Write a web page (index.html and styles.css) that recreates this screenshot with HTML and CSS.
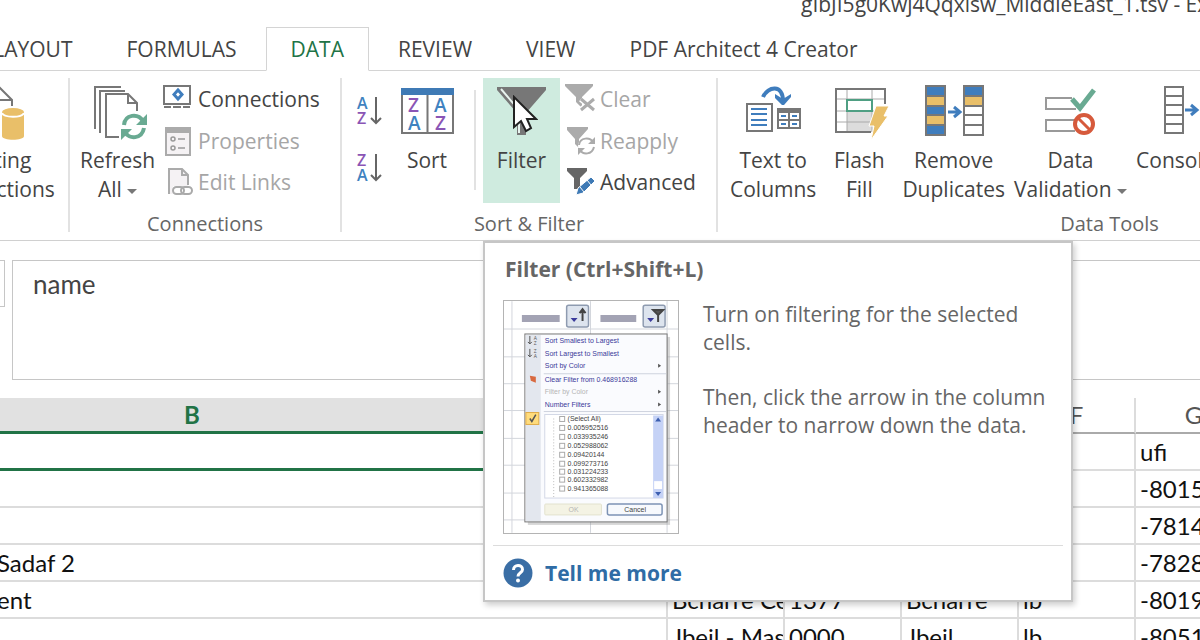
FILE: index.html
```html
<!DOCTYPE html>
<html lang="en">
<head>
  <meta charset="UTF-8">
  <title>MiddleEast_1.tsv - Excel</title>
  <link rel="stylesheet" href="styles.css">
</head>
<body>
  <header class="titlebar">gIbJI5g0Kwj4Qqxlsw_MiddleEast_1.tsv - Excel</header>

  <nav class="tabs">
    <button class="tab">PAGE LAYOUT</button>
    <button class="tab">FORMULAS</button>
    <button class="tab active">DATA</button>
    <button class="tab">REVIEW</button>
    <button class="tab">VIEW</button>
    <button class="tab">PDF Architect 4 Creator</button>
  </nav>

  <div class="ribbon">
    <section class="group external">
      <div class="tools">
        <button class="big">
          <svg class="icon" viewBox="0 0 60 56">
            <path d="M20 3H35L48 16V22M35 3V16H48M20 3V50H34" fill="none" stroke="#777" stroke-width="2"/>
            <path d="M38 28V52C38 57 60 57 60 52V28Z" fill="#e9bf69"/>
            <ellipse cx="49" cy="28" rx="11" ry="4" fill="#e9bf69"/>
            <path d="M38 29C40 34 58 34 60 29" fill="none" stroke="#fff" stroke-width="2"/>
          </svg>
          <span>Existing<br>Connections</span>
        </button>
      </div>
    </section>

    <section class="group connections">
      <div class="tools">
        <button class="big">
          <svg class="icon" viewBox="0 0 60 56">
            <g fill="none" stroke="#777" stroke-width="2">
              <path d="M7 45V3H33M12 49V7H37M31 53H18V10H40L49 19V27M40 10V19H49"/>
            </g>
            <g fill="none" stroke="#69aa92" stroke-width="4">
              <path d="M36 41C37 30 50 29 55 37M56 44C54 55 41 56 37 48"/>
            </g>
            <path d="M59 30V41H48ZM33 56V45H44Z" fill="#69aa92"/>
          </svg>
          <span>Refresh<br>All <i class="caret"></i></span>
        </button>
        <div class="stack">
          <button class="small">
            <svg viewBox="0 0 32 30">
              <path d="M1 2H27V20H1ZM1 23H8M10 23H18M20 23H27" fill="none" stroke="#777" stroke-width="2"/>
              <path d="M15 6L19 10.500L15 15L11 10.500Z" fill="none" stroke="#3f7dbd" stroke-width="3"/>
            </svg>
            Connections
          </button>
          <button class="small" disabled>
            <svg viewBox="0 0 32 30">
              <path d="M3 2H27V29H3Z" fill="#f5f2f4" stroke="#ababab" stroke-width="2"/>
              <path d="M2 1H28V7H2Z" fill="#ababab"/>
              <g fill="none" stroke="#999" stroke-width="1.500">
                <circle cx="10" cy="13" r="2"/><circle cx="10" cy="22" r="2"/>
                <path d="M15 13H22M15 22H22"/>
              </g>
            </svg>
            Properties
          </button>
          <button class="small" disabled>
            <svg viewBox="0 0 32 30">
              <path d="M6 27V2H19L25 8V19H10V27Z" fill="#f5f2f4"/>
              <path d="M6 27V2H19L25 8V18M19 2V8H25" fill="none" stroke="#ababab" stroke-width="2"/>
              <g fill="none" stroke="#aaa" stroke-width="2">
                <rect x="10" y="20" width="11" height="7" rx="3.500"/>
                <rect x="18" y="20" width="11" height="7" rx="3.500"/>
              </g>
            </svg>
            Edit Links
          </button>
        </div>
      </div>
      <h2>Connections</h2>
    </section>

    <section class="group sorting">
      <div class="tools">
        <div class="orders">
          <button class="order" aria-label="Sort A to Z">
            <svg viewBox="0 0 30 32">
              <text x="2" y="15" class="letter-a">A</text>
              <text x="2" y="30" class="letter-z">Z</text>
              <path d="M21 3V29M16 24L21 29L26 24" fill="none" stroke="#666" stroke-width="2"/>
            </svg>
          </button>
          <button class="order" aria-label="Sort Z to A">
            <svg viewBox="0 0 30 32">
              <text x="2" y="15" class="letter-z">Z</text>
              <text x="2" y="30" class="letter-a">A</text>
              <path d="M21 3V29M16 24L21 29L26 24" fill="none" stroke="#666" stroke-width="2"/>
            </svg>
          </button>
        </div>
        <button class="big sort">
          <svg class="icon" viewBox="0 0 60 56">
            <path d="M5 5H56V49H5ZM30.500 10V49" fill="#fff" stroke="#777" stroke-width="2"/>
            <path d="M4 4H57V11H4Z" fill="#3f7ab5"/>
            <g class="wide-letters">
              <text x="11" y="28" class="letter-z">Z</text>
              <text x="11" y="46" class="letter-a">A</text>
              <text x="37" y="28" class="letter-a">A</text>
              <text x="38" y="46" class="letter-z">Z</text>
            </g>
          </svg>
          <span>Sort</span>
        </button>
        <div class="rule"></div>
        <button class="big filter">
          <svg class="icon" viewBox="0 0 60 56">
            <path d="M5 3H54V6L34 29V51H25V29L5 6Z" fill="#777"/>
            <path d="M9 5L27 26V49" fill="none" stroke="#e8f3ee" stroke-width="2"/>
          </svg>
          <span>Filter</span>
        </button>
        <div class="stack">
          <button class="small" disabled>
            <svg viewBox="0 0 32 30">
              <path d="M0 0H28V2L17 13V24L11 18V13L0 2Z" fill="#ababab"/>
              <path d="M16 15L29 26M29 15L16 26" fill="none" stroke="#fff" stroke-width="6"/>
              <path d="M16 15L29 26M29 15L16 26" fill="none" stroke="#ababab" stroke-width="3"/>
            </svg>
            Clear
          </button>
          <button class="small" disabled>
            <svg viewBox="0 0 32 30">
              <path d="M2 1H23V3L14 13V22L10 18V13L2 4Z" fill="#ababab"/>
              <circle cx="22" cy="20" r="9" fill="#fff"/>
              <path d="M14 19C15 11 25 11 28 16M29 21C27 29 18 29 15 24" fill="none" stroke="#ababab" stroke-width="2"/>
              <path d="M30 11V18H23ZM13 29V22H20Z" fill="#ababab"/>
            </svg>
            Reapply
          </button>
          <button class="small">
            <svg viewBox="0 0 32 30">
              <path d="M2 1H22V4L15 11V22H9V11L2 4Z" fill="#666"/>
              <path d="M11 28L13 21L26 10L30 14L18 26Z" fill="#3f7ab5" stroke="#fff"/>
              <path d="M15 20L19 25M22 13L26 18" stroke="#fff"/>
            </svg>
            Advanced
          </button>
        </div>
      </div>
      <h2>Sort &amp; Filter</h2>
    </section>

    <section class="group datatools">
      <div class="tools">
        <button class="big">
          <svg class="icon" viewBox="0 0 60 56">
            <path d="M4 20H29V47H4Z" fill="#fff" stroke="#777" stroke-width="2"/>
            <path d="M8 25H24M8 30H24M8 36H24M8 41H24" stroke="#3f7dbd" stroke-width="2"/>
            <path d="M35 25H57V44H35ZM46 29V44M35 36H57" fill="#fff" stroke="#777" stroke-width="2"/>
            <path d="M34 24H58V29H34Z" fill="#777"/>
            <path d="M38 32H43M49 32H54M38 40H43M49 40H54" stroke="#3f7dbd" stroke-width="2"/>
            <path d="M20 13C25 2 40 0 40 17" fill="none" stroke="#3f7dbd" stroke-width="4"/>
            <path d="M32 10L40 15L48 10V13L41 21H39L32 14Z" fill="#3f7dbd"/>
          </svg>
          <span>Text to<br>Columns</span>
        </button>
        <button class="big flash">
          <svg class="icon" viewBox="0 0 60 56">
            <path d="M18 28H43V48H18Z" fill="#dcdcdc"/>
            <path d="M18 5V48M43 5V48M7 15H56M7 27H56M7 38H44" stroke="#aaa" stroke-width="1"/>
            <path d="M56 20V5H7V48H42" fill="none" stroke="#777" stroke-width="2"/>
            <path d="M18 16H43V27H18Z" fill="#fff" stroke="#4f9f83" stroke-width="2"/>
            <path d="M47 22H60L55 32H59L42 56L45 42H40Z" fill="#e9bf69" stroke="#fff"/>
          </svg>
          <span>Flash<br>Fill</span>
        </button>
        <button class="big">
          <svg class="icon" viewBox="0 0 60 56">
            <path d="M2 2H21V51H2Z" fill="#3f7dbd"/>
            <path d="M2 12H21V22H2ZM2 31H21V41H2Z" fill="#e9bf69"/>
            <path d="M40 2H59V12H40Z" fill="#3f7dbd"/>
            <path d="M40 12H59V22H40Z" fill="#e9bf69"/>
            <path d="M2 2H21V51H2ZM2 12H21M2 22H21M2 31H21M2 41H21M40 2H59V51H40ZM40 12H59M40 22H59M40 31H59M40 41H59" fill="none" stroke="#777" stroke-width="2"/>
            <path d="M24 28H35M30 23L36 28L30 33" fill="none" stroke="#3f7dbd" stroke-width="3"/>
          </svg>
          <span>Remove<br>Duplicates</span>
        </button>
        <button class="big">
          <svg class="icon" viewBox="0 0 60 56">
            <path d="M35 25H5V14H31M34 47H5V36H34" fill="none" stroke="#999" stroke-width="2"/>
            <path d="M31 15L39 24L53 6" fill="none" stroke="#69aa92" stroke-width="5"/>
            <circle cx="43" cy="40" r="9" fill="#fff" stroke="#d65a3c" stroke-width="4"/>
            <path d="M37 34L49 46" stroke="#d65a3c" stroke-width="3"/>
          </svg>
          <span>Data<br>Validation <i class="caret"></i></span>
        </button>
        <button class="big">
          <svg class="icon" viewBox="0 0 60 56">
            <path d="M1 3H19V49H1ZM1 12H19M1 21H19M1 31H19M1 40H19" fill="none" stroke="#777" stroke-width="2"/>
            <path d="M21 26H32M27 21L33 26L27 31" fill="none" stroke="#3f7dbd" stroke-width="3"/>
            <path d="M40 16H58V36H40Z" fill="none" stroke="#777" stroke-width="2"/>
          </svg>
          <span>Consolidate</span>
        </button>
      </div>
      <h2>Data Tools</h2>
    </section>
  </div>

  <div class="formula-bar">
    <div class="fx"></div>
    <textarea class="formula" aria-label="Formula bar">name</textarea>
  </div>

  <table class="sheet">
    <colgroup>
      <col class="col-b"><col><col><col><col><col>
    </colgroup>
    <thead>
      <tr><th class="selected">B</th><th></th><th></th><th></th><th>F</th><th>G</th></tr>
    </thead>
    <tbody>
      <tr><td class="current"></td><td></td><td></td><td></td><td></td><td>ufi</td></tr>
      <tr><td></td><td></td><td></td><td></td><td></td><td>-8015</td></tr>
      <tr><td></td><td></td><td></td><td></td><td></td><td>-7814</td></tr>
      <tr><td>Sadaf 2</td><td></td><td></td><td></td><td></td><td>-7828</td></tr>
      <tr><td>ent</td><td>Bcharre Ce</td><td>1377</td><td>Bcharre</td><td>lb</td><td>-8019</td></tr>
      <tr><td></td><td>Jbeil - Mas</td><td>0000</td><td>Jbeil</td><td>lb</td><td>-8051</td></tr>
    </tbody>
  </table>

  <aside class="tooltip">
    <h3>Filter (Ctrl+Shift+L)</h3>
    <div class="tooltip-body">
      <svg class="preview" viewBox="0 0 175 233">
        <path d="M8 0V233M87 0V233M164 0V233M0 28H175M0 56H175M0 83H175M0 110H175M0 138H175M0 165H175M0 193H175M0 220H175" stroke="#d3d6dc"/>
        <path d="M18 14H56V21H18ZM97 14H133V21H97Z" fill="#a3a3b4"/>
        <g fill="#dde4ee" stroke="#8e9bb0" stroke-width="1.500">
          <rect x="63" y="4" width="22" height="22" rx="2"/>
          <rect x="140" y="4" width="22" height="22" rx="2"/>
        </g>
        <path d="M67 17H74L70.500 21ZM144 17H151L147.500 21Z" fill="#3c3c9c"/>
        <path d="M79 20V9M76 12L79 8L82 12M155 21V14L150 9H160L155 14" fill="#555" stroke="#444" stroke-width="2"/>
        <rect x="24" y="36" width="143" height="189" fill="#999" opacity=".4"/>
        <rect x="21" y="33" width="143" height="189" fill="#fafbfe" stroke="#777"/>
        <path d="M22 34H37V221H22Z" fill="#e3e7ee"/>
        <path d="M40 73H163M40 111H163" stroke="#cfd3de"/>
        <path d="M26 35V43M24 41L26 43L28 41M26 48V56M24 54L26 56L28 54" fill="none" stroke="#555"/>
        <g class="sort-marks">
          <text x="30" y="39">A</text><text x="30" y="44">Z</text>
          <text x="30" y="52">Z</text><text x="30" y="57">A</text>
        </g>
        <path d="M26 75L32 76V82L27 80Z" fill="#d8693f"/>
        <rect x="22" y="112" width="13" height="12" fill="#ffdc7c" stroke="#e0ac48"/>
        <path d="M26 118L28 121L32 114" fill="none" stroke="#555" stroke-width="1.500"/>
        <g class="menu-text">
          <text x="41" y="42">Sort Smallest to Largest</text>
          <text x="41" y="55">Sort Largest to Smallest</text>
          <text x="41" y="67">Sort by Color</text>
          <text x="41" y="81">Clear Filter from 0.468916288</text>
          <text x="41" y="93" class="muted">Filter by Color</text>
          <text x="41" y="106">Number Filters</text>
        </g>
        <path d="M155 63L158 65L155 67ZM155 89L158 91L155 93ZM155 102L158 104L155 106Z" fill="#555"/>
        <rect x="41" y="114" width="119" height="84" fill="#fff" stroke="#d3d8e6"/>
        <path d="M150 115H160V198H150Z" fill="#c5d2f6"/>
        <path d="M151 181H159V189H151Z" fill="#fff"/>
        <path d="M152 121L155 117L158 121ZM152 192L155 196L158 192Z" fill="#3d5fb0"/>
        <path d="M50 118V198" stroke="#bbb" stroke-dasharray="1 2"/>
        <g fill="#fff" stroke="#aaa">
          <rect x="56" y="116" width="5" height="5"/><rect x="56" y="125" width="5" height="5"/>
          <rect x="56" y="134" width="5" height="5"/><rect x="56" y="143" width="5" height="5"/>
          <rect x="56" y="152" width="5" height="5"/><rect x="56" y="161" width="5" height="5"/>
          <rect x="56" y="169" width="5" height="5"/><rect x="56" y="177" width="5" height="5"/>
          <rect x="56" y="186" width="5" height="5"/>
        </g>
        <g class="list-text">
          <text x="64" y="121">(Select All)</text>
          <text x="64" y="130">0.005952516</text>
          <text x="64" y="139">0.033935246</text>
          <text x="64" y="148">0.052988062</text>
          <text x="64" y="157">0.09420144</text>
          <text x="64" y="166">0.099273716</text>
          <text x="64" y="174">0.031224233</text>
          <text x="64" y="182">0.602332982</text>
          <text x="64" y="191">0.941365088</text>
        </g>
        <rect x="41" y="204" width="57" height="11" rx="1" fill="#f4f3e4" stroke="#e3e2cf"/>
        <rect x="104" y="204" width="55" height="11" rx="2" fill="#f7f9fd" stroke="#7d93b5" stroke-width="1.500"/>
        <g class="list-text">
          <text x="65" y="212" class="muted">OK</text>
          <text x="121" y="212">Cancel</text>
        </g>
      </svg>
      <div class="tooltip-text">
        <p>Turn on filtering for the selected cells.</p>
        <p>Then, click the arrow in the column header to narrow down the data.</p>
      </div>
    </div>
    <a class="more" href="#">
      <svg viewBox="0 0 30 30">
        <circle cx="15" cy="15" r="14.500" fill="#3a6ea5"/>
        <path d="M10.500 12C10.500 6 19.500 6 19.500 11.500C19.500 15 15 14.500 15 18.500" fill="none" stroke="#fff" stroke-width="3"/>
        <circle cx="15" cy="22.500" r="2" fill="#fff"/>
      </svg>
      Tell me more
    </a>
  </aside>

  <svg class="cursor" viewBox="0 0 26 38">
    <path d="M2 2V32L9 26L14 36L19 33L15 24H24Z" fill="#fff" stroke="#222" stroke-width="2"/>
  </svg>
</body>
</html>
```
FILE: styles.css
```css
* {
  box-sizing: border-box;
}
body {
  margin: 0;
  height: 100vh;
  overflow: hidden;
  position: relative;
  background: #fff;
  color: #444;
  font-family: "Open Sans", "Noto Sans", sans-serif;
  font-size: 21px;
}
button {
  padding: 0;
  border: none;
  background: none;
  color: inherit;
  font: inherit;
  white-space: nowrap;
}
h2, h3, p {
  margin: 0;
}

/* title and tabs */
.titlebar {
  height: 27px;
  padding-left: 801px;
  line-height: 8px;
  overflow: hidden;
  white-space: nowrap;
}
.tabs {
  display: flex;
  gap: 4px;
  height: 44px;
  margin-left: -90px;
  border-bottom: 1px solid #d4d4d4;
}
.tab {
  height: 44px;
  padding: 0 24px;
  border: 1px solid transparent;
}
.tab.active {
  border-color: #d4d4d4;
  border-bottom-color: #fff;
  background: #fff;
  color: #217346;
}

/* ribbon */
.ribbon {
  display: flex;
  height: 170px;
  padding: 7px 0 8px;
  margin-left: -75px;
  border-bottom: 1px solid #d0d0d0;
  overflow: hidden;
}
.group {
  flex: none;
  border-right: 2px solid #e2e2e2;
}
.group h2 {
  margin-top: 12px;
  color: #666;
  font-size: 20px;
  font-weight: normal;
  line-height: 18px;
  text-align: center;
}
.tools {
  display: flex;
  height: 125px;
}
.external {
  width: 145px;
}
.external .tools {
  padding-left: 8px;
}
.connections {
  width: 272px;
}
.connections .tools {
  gap: 8px;
  padding-left: 10px;
}
.sorting {
  width: 376px;
}
.sorting .tools {
  padding-left: 13px;
}
.datatools {
  width: 785px;
}
.datatools .tools {
  gap: 9px;
  padding-left: 12px;
}
.big {
  display: flex;
  flex-direction: column;
  align-items: center;
  gap: 6px;
  padding-top: 6px;
  line-height: 29px;
}
.icon {
  flex: none;
  width: 60px;
  height: 56px;
}
.flash {
  min-width: 68px;
}
.caret {
  display: inline-block;
  border: 5px solid transparent;
  border-top-color: #777;
  border-bottom: none;
  vertical-align: middle;
}
.stack {
  display: flex;
  flex-direction: column;
}
.small {
  display: flex;
  align-items: center;
  gap: 3px;
  height: 42px;
}
.small svg {
  width: 32px;
  height: 30px;
}
.small:disabled {
  color: #a6a6a6;
}
.orders {
  display: flex;
  flex-direction: column;
  gap: 25px;
  padding-top: 16px;
}
.order, .order svg {
  display: block;
  width: 30px;
  height: 32px;
}
.sort {
  margin-left: 12px;
}
.rule {
  width: 2px;
  height: 100px;
  margin: 12px 7px 0 17px;
  background: #e2e2e2;
}
.filter {
  width: 77px;
  margin-right: 5px;
  background: #cfebdf;
}
.letter-a, .letter-z {
  font-size: 16px;
  font-weight: 600;
}
.wide-letters text {
  font-size: 19px;
}
.letter-a {
  fill: #3f82c0;
}
.letter-z {
  fill: #8a55b5;
}

/* formula bar */
.formula-bar {
  display: flex;
  gap: 7px;
  height: 157px;
  padding: 19px 0 18px;
}
.fx {
  width: 5px;
  height: 47px;
  border: 1px solid #c6c6c6;
  border-left: none;
}
.formula {
  flex: 1;
  padding: 8px 20px;
  border: 1px solid #c6c6c6;
  border-right: none;
  outline: none;
  resize: none;
  color: #444;
  font: 26px/30px Lato, sans-serif;
}

/* sheet */
.sheet {
  width: 1535px;
  margin-left: -282px;
  table-layout: fixed;
  border-collapse: separate;
  border-spacing: 0;
  font-family: Lato, sans-serif;
  font-size: 24px;
  color: #111;
}
.col-b {
  width: 950px;
}
.sheet th, .sheet td {
  height: 37px;
  padding: 0 4px;
  border-right: 2px solid #dcdcdc;
  border-bottom: 2px solid #dcdcdc;
  line-height: 30px;
  overflow: hidden;
  white-space: nowrap;
}
.sheet th {
  height: 36px;
  border-bottom-color: #aaa;
  color: #555;
  font-weight: normal;
}
.sheet th.selected {
  border-bottom: 3px solid #217346;
  background: #e1e1e1;
  color: #217346;
  font-weight: bold;
}
.sheet td:first-child {
  padding-left: 279px;
}
.sheet td.current {
  border-bottom: 3px solid #217346;
}

/* filter tooltip */
.tooltip {
  position: absolute;
  left: 483px;
  top: 241px;
  width: 590px;
  padding: 11px 8px 0;
  border: 2px solid #c6c6c6;
  background: #fff;
  box-shadow: 2px 3px 6px rgba(0, 0, 0, .2);
  color: #666;
}
.tooltip h3 {
  padding-left: 12px;
  font-size: 21px;
  line-height: 30px;
}
.tooltip-body {
  display: flex;
  gap: 24px;
  padding: 16px 8px 11px 10px;
  border-bottom: 1px solid #dcdcdc;
}
.preview {
  flex: none;
  width: 176px;
  height: 234px;
  border: 1px solid #b4b4b4;
}
.menu-text, .list-text {
  font-family: "Liberation Sans", sans-serif;
  font-size: 7px;
}
.menu-text {
  fill: #3a3a9a;
}
.list-text {
  fill: #444;
}
.preview .muted {
  fill: #b5b5b5;
}
.sort-marks {
  font-size: 5px;
  fill: #555;
}
.tooltip-text p {
  margin-bottom: 27px;
  font-size: 21px;
  line-height: 28px;
}
.more {
  display: flex;
  align-items: center;
  gap: 12px;
  height: 54px;
  padding-left: 10px;
  color: #2f6ca5;
  font-weight: bold;
  text-decoration: none;
}
.more svg {
  width: 30px;
  height: 30px;
}
.cursor {
  position: absolute;
  left: 512px;
  top: 95px;
  width: 26px;
  height: 38px;
}
```
